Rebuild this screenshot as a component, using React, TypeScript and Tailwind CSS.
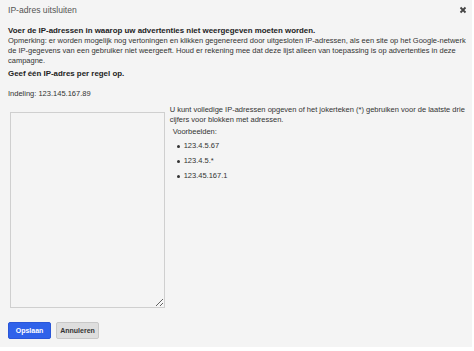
export default function App() {
  return (
    <div className="h-[351px] w-[474px] bg-white font-['Liberation_Sans',Arial,sans-serif]">
      <div className="flex h-[347px] w-[472px] flex-col bg-[#f4f4f4] pl-2 pr-[5px] text-[7.5px] leading-[10px] text-[#333]">
        <div className="flex h-[19px] items-center justify-between">
          <span className="text-[8.6px] text-[#555]">IP-adres uitsluiten</span>
          <svg width="8" height="8" viewBox="0 0 8 8" className="shrink-0">
            <path d="M1.5 1.5 L6.5 6.5 M6.5 1.5 L1.5 6.5" stroke="#444" strokeWidth="1.8" />
          </svg>
        </div>

        <p className="mt-[7px] text-[7.9px] font-bold text-[#222]">
          Voer de IP-adressen in waarop uw advertenties niet weergegeven moeten worden.
        </p>
        <p className="w-[462px]">
          Opmerking: er worden mogelijk nog vertoningen en klikken gegenereerd door uitgesloten
          IP-adressen, als een site op het Google-netwerk de IP-gegevens van een gebruiker niet
          weergeeft. Houd er rekening mee dat deze lijst alleen van toepassing is op advertenties
          in deze campagne.
        </p>
        <p className="mt-[3px] text-[7.9px] font-bold text-[#222]">Geef één IP-adres per regel op.</p>
        <p className="mt-[10px]">Indeling: 123.145.167.89</p>

        <div className="mt-[6px] flex gap-[5px]">
          <textarea className="ml-[2px] mt-[7px] h-[196px] w-[155px] resize border border-[#cfcfcf] bg-[#f4f4f4] outline-none" />
          <div className="w-[298px]">
            <p>
              U kunt volledige IP-adressen opgeven of het jokerteken (*) gebruiken voor de laatste
              drie cijfers voor blokken met adressen.
            </p>
            <p className="mt-[2px] pl-[3px]">Voorbeelden:</p>
            <ul className="mt-[4px] flex flex-col gap-[5px] pl-[7px]">
              {["123.4.5.67", "123.4.5.*", "123.45.167.1"].map((ip) => (
                <li key={ip} className="flex items-center gap-[4px]">
                  <span className="h-[3px] w-[3px] rounded-full bg-[#333]" />
                  {ip}
                </li>
              ))}
            </ul>
          </div>
        </div>

        <div className="mt-[14px] flex gap-[5px]">
          <button
            type="button"
            className="h-[17px] w-[43px] rounded-[2px] border border-[#2a56d8] bg-[#2f62ea] text-[7px] font-bold text-white"
          >
            Opslaan
          </button>
          <button
            type="button"
            className="h-[17px] w-[43px] rounded-[2px] border border-[#c8c8c8] bg-[#dedede] text-[7px] font-bold text-[#333]"
          >
            Annuleren
          </button>
        </div>
      </div>
    </div>
  );
}
